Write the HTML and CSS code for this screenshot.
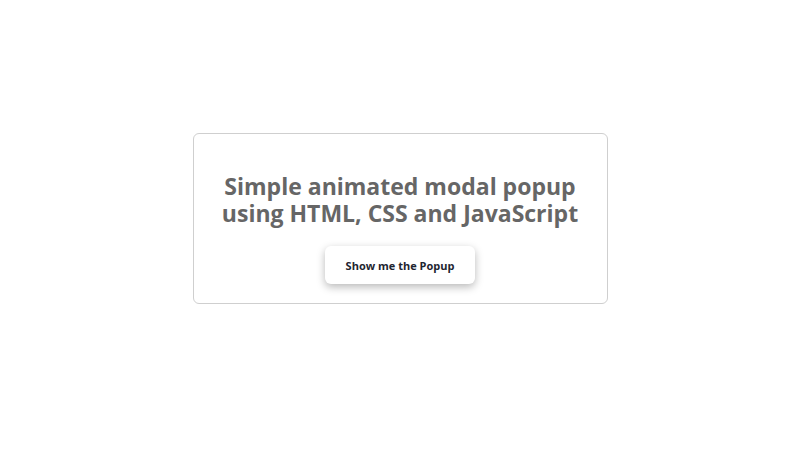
FILE: index.html
```html
<!DOCTYPE html>
<html lang="en">

<head>
    <meta charset="UTF-8">
    <meta name="viewport" content="width=device-width, initial-scale=1.0">
    <title>Simple animated modal popup</title>
    <link rel="stylesheet" href="styles.css">
</head>

<body>
    <div class="container">
        <h1>Simple animated modal popup using HTML, CSS and JavaScript</h1>
        <button type="button" class="open-btn">Show me the Popup</button>
    </div>
</body>

</html>
```

FILE: styles.css
```css
/* Page */
body {
    font-family: "Open Sans", "Noto Sans", sans-serif;
    background-color: #fff;
    display: flex;
    align-items: center;
    justify-content: center;
    height: 100vh;
    margin: 0;
    padding-bottom: 13px;
    box-sizing: border-box;
}

/* Card */
.container {
    width: 415px;
    height: 171px;
    border: 1px solid #cfcfcf;
    border-radius: 6px;
    box-sizing: border-box;
    display: flex;
    flex-direction: column;
    align-items: center;
    padding-top: 39px;
}

h1 {
    color: #666;
    font-size: 23px;
    line-height: 27px;
    font-weight: 700;
    text-align: center;
    margin: 0 0 19px;
    padding: 0 18px;
}

/* Button */
.open-btn {
    font-family: inherit;
    width: 150px;
    height: 38px;
    background-color: #fff;
    color: #1e2530;
    font-size: 11px;
    font-weight: 700;
    border: none;
    border-radius: 6px;
    box-shadow: 0 3px 8px rgba(0, 0, 0, 0.28);
    cursor: pointer;
}
```
